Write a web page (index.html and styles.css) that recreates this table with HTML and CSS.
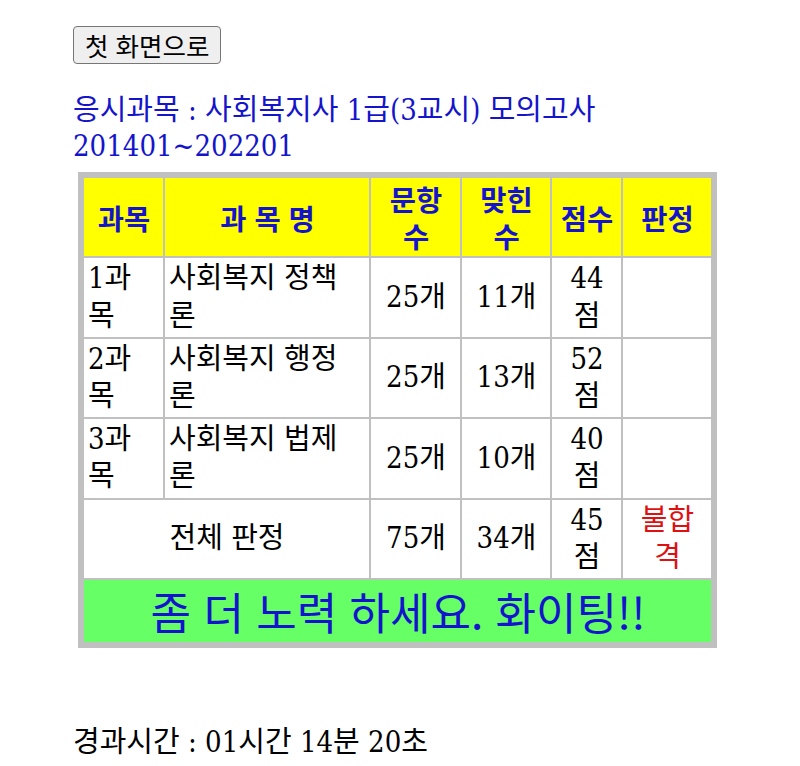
FILE: index.html
```html
<!DOCTYPE html>
<html lang="ko">
<head>
<meta charset="utf-8">
<title>모의고사 결과</title>
<link rel="stylesheet" href="styles.css">
</head>
<body>
<div class="page">
  <button class="home-btn" type="button">첫 화면으로</button>
  <p class="subject">응시과목 : 사회복지사 1급(3교시) 모의고사 201401~202201</p>
  <table class="result">
    <colgroup>
      <col class="c1"><col class="c2"><col class="c3"><col class="c4"><col class="c5"><col class="c6">
    </colgroup>
    <thead>
      <tr class="head">
        <th>과목</th>
        <th>과 목 명</th>
        <th>문항 수</th>
        <th>맞힌 수</th>
        <th>점수</th>
        <th>판정</th>
      </tr>
    </thead>
    <tbody>
      <tr>
        <td class="left">1과<br>목</td>
        <td class="left">사회복지 정책<br>론</td>
        <td>25개</td>
        <td>11개</td>
        <td>44<br>점</td>
        <td></td>
      </tr>
      <tr>
        <td class="left">2과<br>목</td>
        <td class="left">사회복지 행정<br>론</td>
        <td>25개</td>
        <td>13개</td>
        <td>52<br>점</td>
        <td></td>
      </tr>
      <tr>
        <td class="left">3과<br>목</td>
        <td class="left">사회복지 법제<br>론</td>
        <td>25개</td>
        <td>10개</td>
        <td>40<br>점</td>
        <td></td>
      </tr>
      <tr>
        <td colspan="2">전체 판정</td>
        <td>75개</td>
        <td>34개</td>
        <td>45<br>점</td>
        <td class="fail">불합<br>격</td>
      </tr>
      <tr>
        <td colspan="6" class="cheer">좀 더 노력 하세요. 화이팅!!</td>
      </tr>
    </tbody>
  </table>
  <p class="elapsed">경과시간 : 01시간 14분 20초</p>
</div>
</body>
</html>
```

FILE: styles.css
```css
html, body {
  margin: 0;
  padding: 0;
  background: #ffffff;
}

body {
  font-family: "DejaVu Serif Condensed", "DejaVu Serif", "Noto Sans CJK KR", serif;
  font-stretch: condensed;
  font-size: 29px;
  color: #000000;
}

.page {
  padding: 26px 0 0 73px;
  width: 560px;
}

.home-btn {
  font-family: "Noto Sans CJK KR", sans-serif;
  font-stretch: normal;
  font-size: 25.5px;
  line-height: 34px;
  padding: 1px 11px;
  background: #efefef;
  border: 1px solid #767676;
  border-radius: 4px;
  color: #000000;
  margin: 0;
}

.subject {
  color: #1414cc;
  margin: 28px 0 8px 0;
  line-height: 36px;
}

.result {
  margin-left: 5px;
  table-layout: fixed;
  width: 638px;
  border-collapse: separate;
  border-spacing: 2px;
  border: 4px solid #c0c0c0;
  background: #c0c0c0;
}

.c1 { width: 79px; }
.c2 { width: 204px; }
.c3 { width: 89px; }
.c4 { width: 88px; }
.c5 { width: 69px; }
.c6 { width: 88px; }

.result th,
.result td {
  padding: 2px 3px 2px 4px;
  line-height: 37.2px;
  text-align: center;
  vertical-align: middle;
  background: #ffffff;
}

.result th {
  background: #ffff00;
  color: #1414cc;
  font-family: "Noto Sans CJK KR", sans-serif;
  font-weight: bold;
  font-size: 28.5px;
}

.result td.left {
  text-align: left;
}

.result td.fail {
  color: #e01010;
}

.result td.cheer {
  background: #66ff66;
  color: #1414cc;
  font-family: "Noto Sans CJK KR", sans-serif;
  font-stretch: normal;
  font-size: 44px;
  line-height: 58px;
}

.elapsed {
  margin: 76px 0 0 0;
  line-height: 36px;
}
```
